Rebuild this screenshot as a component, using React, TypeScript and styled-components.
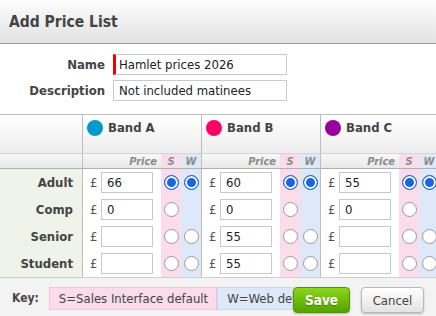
import React from 'react';
import styled, { createGlobalStyle } from 'styled-components';

const FONT = `'DejaVu Sans Condensed', 'DejaVu Sans', Verdana, sans-serif`;

const GlobalStyle = createGlobalStyle`
  html, body { margin: 0; padding: 0; background: #fff; }
  body { font-family: ${FONT}; color: #444; }
  * { box-sizing: border-box; }
`;

const PINK = '#fbdcea';
const BLUE = '#dde9f8';
const GRID = '#bdbdbd';

const Dialog = styled.div`
  width: 436px;
  height: 316px;
  display: flex;
  flex-direction: column;
  overflow: hidden;
  background: #fff;
`;

const TitleBar = styled.div`
  flex: none;
  height: 44px;
  display: flex;
  align-items: center;
  padding-left: 9px;
  background: linear-gradient(#fdfdfd, #e2e2e2);
  border-bottom: 1px solid #9a9a9a;
  font-size: 15.5px;
  font-weight: bold;
  color: #444;
`;

const Form = styled.div`
  flex: none;
  display: grid;
  grid-template-columns: 105px 174px;
  column-gap: 8px;
  row-gap: 5px;
  padding-top: 10px;
`;

const FieldLabel = styled.label`
  align-self: center;
  text-align: right;
  font-size: 13px;
  font-weight: bold;
  color: #444;
`;

const TextField = styled.input<{ $required?: boolean }>`
  height: 21px;
  width: 174px;
  border: 1px solid #cacaca;
  border-left: ${(p) => (p.$required ? '3px solid #f00000' : '1px solid #cacaca')};
  padding: 0 0 0 ${(p) => (p.$required ? '3px' : '5px')};
  font-family: ${FONT};
  font-size: 13px;
  color: #222;
  background: #fff;
  outline: none;
`;

const Grid = styled.div`
  flex: none;
  margin-top: 13px;
  border-top: 1px solid ${GRID};
  border-bottom: 1px solid #cfcfcf;
  width: 440px;
`;

const HeaderRow = styled.div`
  display: flex;
  height: 39px;
  border-bottom: 1px solid #d4d4d4;
  background: linear-gradient(#ffffff, #eeeeee);
`;

const SubHeaderRow = styled.div`
  display: flex;
  height: 15px;
  border-bottom: 1px solid #b0b0b0;
  background: linear-gradient(#f8f8f8, #e9e9e9);
`;

const DataRow = styled.div`
  display: flex;
  height: 27px;
`;

const LabelCell = styled.div<{ $tint?: boolean }>`
  flex: none;
  width: 83px;
  border-right: 1px solid ${GRID};
  background: ${(p) => (p.$tint ? '#f0f3e9' : 'transparent')};
  display: flex;
  align-items: center;
  justify-content: flex-end;
  padding-right: 9px;
  font-size: 13px;
  font-weight: bold;
  color: #444;
`;

const BandCell = styled.div`
  flex: none;
  width: 119px;
  border-right: 1px solid ${GRID};
  display: flex;
  align-items: stretch;
`;

const BandTitle = styled.div`
  display: flex;
  align-items: center;
  align-self: flex-start;
  gap: 5px;
  padding: 5px 0 0 4px;
  font-size: 13px;
  font-weight: bold;
  color: #444;
  line-height: 14px;
`;

const Dot = styled.span<{ $color: string }>`
  width: 16px;
  height: 16px;
  border-radius: 50%;
  background: ${(p) => p.$color};
`;

const ColHead = styled.div<{ $bg?: string; $w: number; $align?: string }>`
  width: ${(p) => p.$w}px;
  flex: none;
  background: ${(p) => p.$bg ?? 'transparent'};
  text-align: ${(p) => p.$align ?? 'center'};
  padding-right: ${(p) => (p.$align === 'right' ? '4px' : '0')};
  font-size: 11px;
  font-weight: bold;
  font-style: italic;
  color: #8c8c8c;
  line-height: 15px;
`;

const Pound = styled.span`
  flex: none;
  width: 18px;
  padding-left: 7px;
  align-self: center;
  font-size: 13px;
  color: #555;
`;

const PriceInput = styled.input`
  flex: none;
  align-self: center;
  width: 52px;
  height: 21px;
  border: 1px solid #c8c8c8;
  padding: 0 0 0 5px;
  font-family: ${FONT};
  font-size: 13px;
  color: #222;
  outline: none;
  margin-right: 8px;
`;

const RadioCol = styled.div<{ $bg: string }>`
  flex: none;
  width: 20px;
  background: ${(p) => p.$bg};
  display: flex;
  align-items: center;
  justify-content: center;
`;

const Radio = styled.input.attrs({ type: 'radio' })`
  appearance: none;
  -webkit-appearance: none;
  margin: 0;
  width: 15px;
  height: 15px;
  border-radius: 50%;
  border: 1px solid #9a9a9a;
  background: #fff;
  &:checked {
    border: 1.5px solid #1864e2;
    background: #1864e2;
    box-shadow: inset 0 0 0 2px #fff;
  }
`;

const Footer = styled.div`
  flex: none;
  height: 38px;
  background: #f3f3f3;
  display: flex;
  align-items: flex-start;
  padding: 9px 12px 0 12px;
`;

const KeyLabel = styled.span`
  flex: none;
  font-size: 12px;
  font-weight: bold;
  color: #444;
  line-height: 23px;
  margin-right: 10px;
`;

const KeyStrip = styled.div`
  flex: 1;
  min-width: 0;
  overflow: hidden;
  display: flex;
`;

const KeyItem = styled.span<{ $bg: string; $border: string }>`
  flex: none;
  height: 23px;
  line-height: 21px;
  white-space: nowrap;
  padding: 0 8px 0 9px;
  background: ${(p) => p.$bg};
  border: 1px solid ${(p) => p.$border};
  font-size: 13px;
  color: #444;
`;

const Button = styled.button<{ $primary?: boolean }>`
  flex: none;
  height: 26px;
  border-radius: 4px;
  font-family: ${FONT};
  cursor: pointer;
  padding: 0;
  box-shadow: 0 1px 2px rgba(0, 0, 0, 0.25);
  ${(p) =>
    p.$primary
      ? `
    width: 57px;
    background: linear-gradient(#8cd61c, #54a200);
    border: 1px solid #4f9400;
    color: #fff;
    font-weight: bold;
    font-size: 13.5px;
    text-shadow: 0 1px 1px rgba(0,0,0,0.3);
  `
      : `
    width: 63px;
    margin-left: 11px;
    background: linear-gradient(#ffffff, #e4e4e4);
    border: 1px solid #b8b8b8;
    color: #444;
    font-size: 13px;
  `}
`;

const bands = [
  { name: 'Band A', color: '#0099cc' },
  { name: 'Band B', color: '#ff0066' },
  { name: 'Band C', color: '#990099' },
];

type Row = { label: string; prices: string[]; s: boolean[]; w: boolean[] | null };

const rows: Row[] = [
  { label: 'Adult', prices: ['66', '60', '55'], s: [true, true, true], w: [true, true, true] },
  { label: 'Comp', prices: ['0', '0', '0'], s: [false, false, false], w: null },
  { label: 'Senior', prices: ['', '55', ''], s: [false, false, false], w: [false, false, false] },
  { label: 'Student', prices: ['', '55', ''], s: [false, false, false], w: [false, false, false] },
];

export default function App() {
  return (
    <>
      <GlobalStyle />
      <Dialog>
        <TitleBar>Add Price List</TitleBar>
        <Form>
          <FieldLabel>Name</FieldLabel>
          <TextField $required defaultValue="Hamlet prices 2026" />
          <FieldLabel>Description</FieldLabel>
          <TextField defaultValue="Not included matinees" />
        </Form>
        <Grid>
          <HeaderRow>
            <LabelCell />
            {bands.map((b) => (
              <BandCell key={b.name}>
                <BandTitle>
                  <Dot $color={b.color} />
                  {b.name}
                </BandTitle>
              </BandCell>
            ))}
          </HeaderRow>
          <SubHeaderRow>
            <LabelCell />
            {bands.map((b) => (
              <BandCell key={b.name}>
                <ColHead $w={78} $align="right">Price</ColHead>
                <ColHead $w={20} $bg={PINK}>S</ColHead>
                <ColHead $w={20} $bg={BLUE}>W</ColHead>
              </BandCell>
            ))}
          </SubHeaderRow>
          {rows.map((r) => (
            <DataRow key={r.label}>
              <LabelCell $tint>{r.label}</LabelCell>
              {bands.map((b, i) => (
                <BandCell key={b.name}>
                  <Pound>£</Pound>
                  <PriceInput defaultValue={r.prices[i]} />
                  <RadioCol $bg={PINK}>
                    <Radio name={`s-${i}`} defaultChecked={r.s[i]} />
                  </RadioCol>
                  <RadioCol $bg={BLUE}>
                    {r.w && <Radio name={`w-${i}`} defaultChecked={r.w[i]} />}
                  </RadioCol>
                </BandCell>
              ))}
            </DataRow>
          ))}
        </Grid>
        <Footer>
          <KeyLabel>Key:</KeyLabel>
          <KeyStrip>
            <KeyItem $bg={PINK} $border="#f0c6da">S=Sales Interface default</KeyItem>
            <KeyItem $bg={BLUE} $border="#c6d8ee">W=Web default</KeyItem>
          </KeyStrip>
          <Button $primary>Save</Button>
          <Button>Cancel</Button>
        </Footer>
      </Dialog>
    </>
  );
}
